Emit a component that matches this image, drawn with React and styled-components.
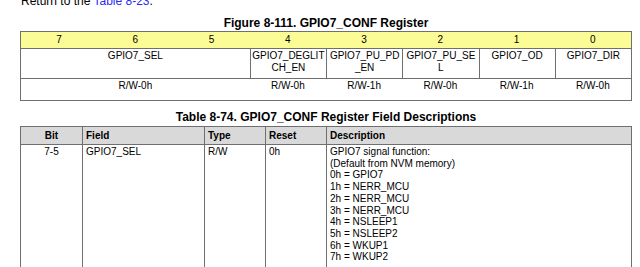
import React from "react";
import styled, { createGlobalStyle } from "styled-components";

const GlobalStyle = createGlobalStyle`
  html, body {
    margin: 0;
    padding: 0;
    background: #fff;
  }
  body {
    font-family: "Liberation Sans", Arial, sans-serif;
    color: #000;
  }
`;

const Page = styled.div`
  width: 640px;
  height: 267px;
  overflow: hidden;
  box-sizing: border-box;
  padding-left: 20px;
`;

const Intro = styled.p`
  margin: -6px 0 0 1px;
  font-size: 12px;
  line-height: 14px;
`;

const Link = styled.a`
  color: #2b2bf5;
  text-decoration: none;
`;

const Caption = styled.div`
  width: 612px;
  text-align: center;
  font-weight: bold;
  font-size: 12px;
  line-height: 14px;
  margin-top: ${(p) => p.$top}px;
  margin-bottom: ${(p) => p.$bottom}px;
`;

const RegTable = styled.div`
  display: grid;
  grid-template-columns: repeat(8, 1fr);
  width: 612px;
  box-sizing: border-box;
  border: 1px solid #6f6f6f;
  font-size: 10px;
`;

const BitCell = styled.div`
  height: 16px;
  line-height: 16px;
  text-align: center;
  background: #fcfc96;
`;

const FieldCell = styled.div`
  grid-column: span ${(p) => p.$span || 1};
  height: 28px;
  padding-top: 1px;
  line-height: 12px;
  text-align: center;
  border-top: 1px solid #6f6f6f;
  border-left: ${(p) => (p.$first ? "none" : "1px solid #6f6f6f")};
`;

const AccessCell = styled.div`
  grid-column: span ${(p) => p.$span || 1};
  height: 20px;
  padding-top: 1px;
  line-height: 12px;
  text-align: center;
  border-top: 1px solid #6f6f6f;
`;

const FieldTable = styled.div`
  display: grid;
  grid-template-columns: 62px 122px 61px 61px 305px;
  width: 612px;
  box-sizing: border-box;
  border-top: 1px solid #6f6f6f;
  border-right: 1px solid #6f6f6f;
  font-size: 10px;
`;

const HeadCell = styled.div`
  height: 17px;
  line-height: 17px;
  padding: 0 3px;
  font-weight: bold;
  background: #d9d9d9;
  border-left: 1px solid #6f6f6f;
  text-align: ${(p) => (p.$center ? "center" : "left")};
`;

const BodyCell = styled.div`
  min-height: ${(p) => p.$height}px;
  padding: 1px 3px 0;
  line-height: 11.7px;
  border-top: 1px solid #6f6f6f;
  border-left: 1px solid #6f6f6f;
  text-align: ${(p) => (p.$center ? "center" : "left")};
`;

const Line = styled.div`
  white-space: nowrap;
`;

const bits = [7, 6, 5, 4, 3, 2, 1, 0];

const fields = [
  { name: ["GPIO7_SEL"], span: 3, access: "R/W-0h" },
  { name: ["GPIO7_DEGLIT", "CH_EN"], access: "R/W-0h" },
  { name: ["GPIO7_PU_PD", "_EN"], access: "R/W-1h" },
  { name: ["GPIO7_PU_SE", "L"], access: "R/W-0h" },
  { name: ["GPIO7_OD"], access: "R/W-1h" },
  { name: ["GPIO7_DIR"], access: "R/W-0h" },
];

const description = [
  "GPIO7 signal function:",
  "(Default from NVM memory)",
  "0h = GPIO7",
  "1h = NERR_MCU",
  "2h = NERR_MCU",
  "3h = NERR_MCU",
  "4h = NSLEEP1",
  "5h = NSLEEP2",
  "6h = WKUP1",
  "7h = WKUP2",
];

const App = () => {
  return (
    <Page>
      <GlobalStyle />
      <Intro>
        Return to the <Link href="#">Table 8-23</Link>.
      </Intro>

      <Caption $top={8} $bottom={1}>
        Figure 8-111. GPIO7_CONF Register
      </Caption>
      <RegTable>
        {bits.map((b) => (
          <BitCell key={b}>{b}</BitCell>
        ))}
        {fields.map((f, i) => (
          <FieldCell key={f.name[0]} $span={f.span} $first={i === 0}>
            {f.name.map((part) => (
              <Line key={part}>{part}</Line>
            ))}
          </FieldCell>
        ))}
        {fields.map((f) => (
          <AccessCell key={f.name[0]} $span={f.span}>
            {f.access}
          </AccessCell>
        ))}
      </RegTable>

      <Caption $top={9} $bottom={2}>
        Table 8-74. GPIO7_CONF Register Field Descriptions
      </Caption>
      <FieldTable>
        <HeadCell $center>Bit</HeadCell>
        <HeadCell>Field</HeadCell>
        <HeadCell>Type</HeadCell>
        <HeadCell>Reset</HeadCell>
        <HeadCell>Description</HeadCell>

        <BodyCell $center $height={122}>7-5</BodyCell>
        <BodyCell $height={122}>GPIO7_SEL</BodyCell>
        <BodyCell $height={122}>R/W</BodyCell>
        <BodyCell $height={122}>0h</BodyCell>
        <BodyCell $height={122}>
          {description.map((d) => (
            <Line key={d}>{d}</Line>
          ))}
        </BodyCell>

        <BodyCell $center $height={40} />
        <BodyCell $height={40} />
        <BodyCell $height={40} />
        <BodyCell $height={40} />
        <BodyCell $height={40} />
      </FieldTable>
    </Page>
  );
};

export default App;
